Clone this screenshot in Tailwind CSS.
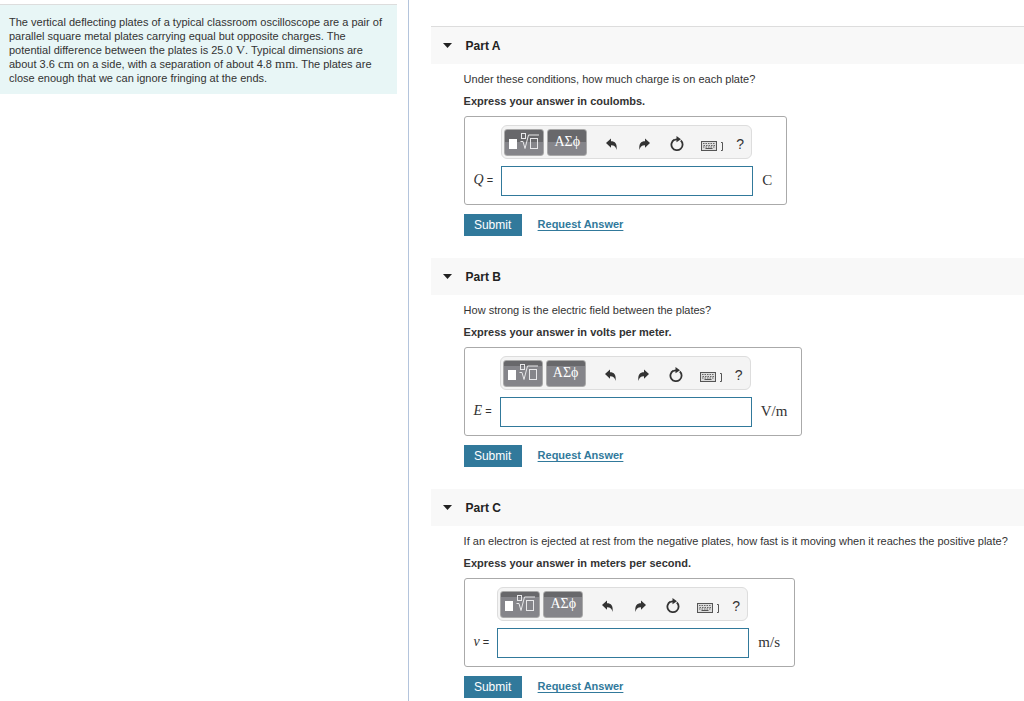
<!DOCTYPE html>
<html lang="en">
<head>
    <meta charset="UTF-8">
    <title>Oscilloscope Plates</title>
    <script src="https://cdn.jsdelivr.net/npm/@tailwindcss/browser@4"></script>
</head>
<body class="bg-white min-h-screen flex text-[11px] leading-[14px] text-[#333] font-['Liberation_Sans',Arial,sans-serif]">
    <!-- Shared toolbar icons -->
    <svg class="hidden">
        <symbol id="icon-template" viewBox="0 0 30 20">
            <rect x="0" y="7" width="8" height="10" fill="#fff"/>
            <g fill="none" stroke="#e8e8ea" stroke-width="1">
                <rect x="12.500" y="1.500" width="4" height="5"/>
                <path d="M11.500 9.500h2.500l2 7 3.500-13.500H30"/>
                <rect x="21.500" y="6.500" width="7" height="10"/>
            </g>
        </symbol>
        <symbol id="icon-undo" viewBox="0 0 12 12">
            <path d="M0 5L5 .5V3.200C9 3.200 11.500 5.500 10.500 12 10 9 8.500 7.300 5 7.300V9.800Z" fill="#333"/>
        </symbol>
        <symbol id="icon-redo" viewBox="0 0 12 12">
            <path d="M12 5L7 .5V3.200C3 3.200 .5 5.500 1.500 12 2 9 3.500 7.300 7 7.300V9.800Z" fill="#333"/>
        </symbol>
        <symbol id="icon-reset" viewBox="0 0 14 16">
            <path d="M10.800 4.500A5.600 5.600 0 1 1 4.500 3.600" fill="none" stroke="#333" stroke-width="1.800"/>
            <path d="M6.500 0L11 3.200 6.500 6.200V4.200L4.500 4.800 4 3.200 6.500 2.400Z" fill="#333"/>
        </symbol>
        <symbol id="icon-keyboard" viewBox="0 0 23 10">
            <rect x=".5" y=".5" width="15" height="9" fill="#ddd" stroke="#555"/>
            <path d="M2 2.500h12M2.500 4.500h12M2 6h12" stroke="#666" stroke-dasharray="1.500 1"/>
            <path d="M4.500 7.500h7" stroke="#555"/>
            <path d="M20 1.500h1.500v8H20" fill="none" stroke="#555"/>
        </symbol>
    </svg>

    <!-- Problem statement -->
    <aside class="w-[calc(40%-1px)] shrink-0 border-r border-[#b4c4dc] pt-1 pr-[11px]">
        <p class="bg-[#e8f6f6] border-t border-[#ddd] pt-[10px] pb-[9px] pl-[9px] pr-2">
            The vertical deflecting plates of a typical classroom oscilloscope are a pair of parallel square metal plates carrying equal but opposite charges. The potential difference between the plates is 25.0 <span class="font-['Liberation_Serif',serif] text-[13px] leading-3">V</span>. Typical dimensions are about 3.6 <span class="font-['Liberation_Serif',serif] text-[13px] leading-3">cm</span> on a side, with a separation of about 4.8 <span class="font-['Liberation_Serif',serif] text-[13px] leading-3">mm</span>. The plates are close enough that we can ignore fringing at the ends.
        </p>
    </aside>

    <main class="flex-1 min-w-0 pl-[22px] pt-[26px]">
        <!-- Part A -->
        <section class="pb-[22px]">
            <h2 class="h-[38px] flex items-center gap-[14px] pl-3 bg-[#f8f8f8] border-t border-[#ddd] text-xs font-bold text-[#222]">
                <svg class="w-[9px] h-[5px]" viewBox="0 0 9 5"><path d="M0 0h9L4.500 5Z" fill="#222"/></svg>
                Part A
            </h2>
            <div class="pl-[33px] pt-2">
                <p class="whitespace-nowrap">Under these conditions, how much charge is on each plate?</p>
                <p class="font-bold pt-2">Express your answer in coulombs.</p>
                <div class="mt-2 w-fit flex border border-[#aaa] rounded-[3px] pt-2 pb-2 pl-[9px] pr-[14px]">
                    <label for="answer-a" class="pt-[48px] pr-2 whitespace-nowrap"><i class="font-['Liberation_Serif',serif] text-[14px]">Q</i> =</label>
                    <div>
                        <div class="w-[251px] h-[34px] flex items-center bg-[#f4f4f4] border border-[#ddd] rounded-md pl-[2px]">
                            <button aria-label="Templates" class="w-10 h-[27px] flex items-center justify-center bg-linear-to-b from-[#68686b] from-50% to-[#85858a] to-50% border border-[#aaa] rounded-[3px]"><svg class="w-[30px] h-5"><use href="#icon-template"/></svg></button>
                            <button class="w-10 h-[27px] ml-[3px] bg-linear-to-b from-[#68686b] from-50% to-[#85858a] to-50% border border-[#aaa] rounded-[3px] text-white text-[14px] font-['Liberation_Serif',serif]">ΑΣϕ</button>
                            <button aria-label="Undo" class="ml-[19px] mt-1"><svg class="w-3 h-3"><use href="#icon-undo"/></svg></button>
                            <button aria-label="Redo" class="ml-5 mt-1"><svg class="w-3 h-3"><use href="#icon-redo"/></svg></button>
                            <button aria-label="Reset" class="ml-5 mt-1"><svg class="w-[14px] h-4"><use href="#icon-reset"/></svg></button>
                            <button aria-label="Keyboard" class="ml-[17px] mt-2"><svg class="w-[23px] h-[10px]"><use href="#icon-keyboard"/></svg></button>
                            <button aria-label="Help" class="ml-3 mt-1 text-[14px]">?</button>
                        </div>
                        <input id="answer-a" type="text" class="block mt-[7px] w-[252px] h-[30px] px-2 bg-white border border-[#31799b] text-sm">
                    </div>
                    <span class="pt-[48px] pl-[9px] font-['Liberation_Serif',serif] text-[15px]">C</span>
                </div>
                <div class="flex items-start gap-4 mt-[9px]">
                    <button class="w-[58px] h-[22px] bg-[#31799b] text-white text-xs">Submit</button>
                    <a href="#" class="pt-[3px] text-[#31799b] font-bold underline underline-offset-2">Request Answer</a>
                </div>
            </div>
        </section>

        <!-- Part B -->
        <section class="pb-[22px]">
            <h2 class="h-[37px] flex items-center gap-[14px] pl-3 bg-[#f8f8f8] text-xs font-bold text-[#222]">
                <svg class="w-[9px] h-[5px]" viewBox="0 0 9 5"><path d="M0 0h9L4.500 5Z" fill="#222"/></svg>
                Part B
            </h2>
            <div class="pl-[33px] pt-2">
                <p class="whitespace-nowrap">How strong is the electric field between the plates?</p>
                <p class="font-bold pt-2">Express your answer in volts per meter.</p>
                <div class="mt-2 w-fit flex border border-[#aaa] rounded-[3px] pt-2 pb-2 pl-[9px] pr-[14px]">
                    <label for="answer-b" class="pt-[48px] pr-2 whitespace-nowrap"><i class="font-['Liberation_Serif',serif] text-[14px]">E</i> =</label>
                    <div>
                        <div class="w-[251px] h-[34px] flex items-center bg-[#f4f4f4] border border-[#ddd] rounded-md pl-[2px]">
                            <button aria-label="Templates" class="w-10 h-[27px] flex items-center justify-center bg-linear-to-b from-[#68686b] from-20% to-[#85858a] to-20% border border-[#aaa] rounded-[3px]"><svg class="w-[30px] h-5"><use href="#icon-template"/></svg></button>
                            <button class="w-10 h-[27px] ml-[3px] bg-linear-to-b from-[#68686b] from-20% to-[#85858a] to-20% border border-[#aaa] rounded-[3px] text-white text-[14px] font-['Liberation_Serif',serif]">ΑΣϕ</button>
                            <button aria-label="Undo" class="ml-[19px] mt-1"><svg class="w-3 h-3"><use href="#icon-undo"/></svg></button>
                            <button aria-label="Redo" class="ml-5 mt-1"><svg class="w-3 h-3"><use href="#icon-redo"/></svg></button>
                            <button aria-label="Reset" class="ml-5 mt-1"><svg class="w-[14px] h-4"><use href="#icon-reset"/></svg></button>
                            <button aria-label="Keyboard" class="ml-[17px] mt-2"><svg class="w-[23px] h-[10px]"><use href="#icon-keyboard"/></svg></button>
                            <button aria-label="Help" class="ml-3 mt-1 text-[14px]">?</button>
                        </div>
                        <input id="answer-b" type="text" class="block mt-[7px] w-[252px] h-[30px] px-2 bg-white border border-[#31799b] text-sm">
                    </div>
                    <span class="pt-[48px] pl-[9px] font-['Liberation_Serif',serif] text-[15px]">V/m</span>
                </div>
                <div class="flex items-start gap-4 mt-[9px]">
                    <button class="w-[58px] h-[22px] bg-[#31799b] text-white text-xs">Submit</button>
                    <a href="#" class="pt-[3px] text-[#31799b] font-bold underline underline-offset-2">Request Answer</a>
                </div>
            </div>
        </section>

        <!-- Part C -->
        <section>
            <h2 class="h-[37px] flex items-center gap-[14px] pl-3 bg-[#f8f8f8] text-xs font-bold text-[#222]">
                <svg class="w-[9px] h-[5px]" viewBox="0 0 9 5"><path d="M0 0h9L4.500 5Z" fill="#222"/></svg>
                Part C
            </h2>
            <div class="pl-[33px] pt-2">
                <p class="whitespace-nowrap">If an electron is ejected at rest from the negative plates, how fast is it moving when it reaches the positive plate?</p>
                <p class="font-bold pt-2">Express your answer in meters per second.</p>
                <div class="mt-2 w-fit flex border border-[#aaa] rounded-[3px] pt-2 pb-2 pl-[9px] pr-[14px]">
                    <label for="answer-c" class="pt-[48px] pr-2 whitespace-nowrap"><i class="font-['Liberation_Serif',serif] text-[14px]">v</i> =</label>
                    <div>
                        <div class="w-[251px] h-[34px] flex items-center bg-[#f4f4f4] border border-[#ddd] rounded-md pl-[2px]">
                            <button aria-label="Templates" class="w-10 h-[27px] flex items-center justify-center bg-linear-to-b from-[#68686b] from-20% to-[#85858a] to-20% border border-[#aaa] rounded-[3px]"><svg class="w-[30px] h-5"><use href="#icon-template"/></svg></button>
                            <button class="w-10 h-[27px] ml-[3px] bg-linear-to-b from-[#68686b] from-20% to-[#85858a] to-20% border border-[#aaa] rounded-[3px] text-white text-[14px] font-['Liberation_Serif',serif]">ΑΣϕ</button>
                            <button aria-label="Undo" class="ml-[19px] mt-1"><svg class="w-3 h-3"><use href="#icon-undo"/></svg></button>
                            <button aria-label="Redo" class="ml-5 mt-1"><svg class="w-3 h-3"><use href="#icon-redo"/></svg></button>
                            <button aria-label="Reset" class="ml-5 mt-1"><svg class="w-[14px] h-4"><use href="#icon-reset"/></svg></button>
                            <button aria-label="Keyboard" class="ml-[17px] mt-2"><svg class="w-[23px] h-[10px]"><use href="#icon-keyboard"/></svg></button>
                            <button aria-label="Help" class="ml-3 mt-1 text-[14px]">?</button>
                        </div>
                        <input id="answer-c" type="text" class="block mt-[7px] w-[252px] h-[30px] px-2 bg-white border border-[#31799b] text-sm">
                    </div>
                    <span class="pt-[48px] pl-[9px] font-['Liberation_Serif',serif] text-[15px]">m/s</span>
                </div>
                <div class="flex items-start gap-4 mt-[9px]">
                    <button class="w-[58px] h-[22px] bg-[#31799b] text-white text-xs">Submit</button>
                    <a href="#" class="pt-[3px] text-[#31799b] font-bold underline underline-offset-2">Request Answer</a>
                </div>
            </div>
        </section>
    </main>
</body>
</html>
